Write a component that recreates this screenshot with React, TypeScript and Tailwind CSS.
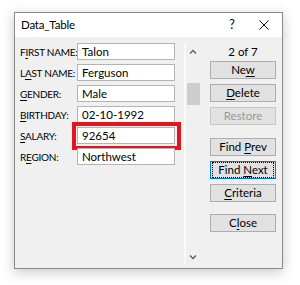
const font = { fontFamily: 'Lato, "Noto Sans", "Liberation Sans", sans-serif' };

type Field = { pre: string; key: string; post: string; value: string; mark?: boolean };

const fields: Field[] = [
  { pre: "F", key: "I", post: "RST NAME:", value: "Talon" },
  { pre: "L", key: "A", post: "ST NAME:", value: "Ferguson" },
  { pre: "", key: "G", post: "ENDER:", value: "Male" },
  { pre: "", key: "B", post: "IRTHDAY:", value: "02-10-1992" },
  { pre: "", key: "S", post: "ALARY:", value: "92654", mark: true },
  { pre: "R", key: "E", post: "GION:", value: "Northwest" },
];

function Btn({ pre, k, post, disabled, focus, className = "" }: { pre: string; k?: string; post?: string; disabled?: boolean; focus?: boolean; className?: string }) {
  const label = (
    <span className="whitespace-pre">
      {pre}
      {k && <span className="underline underline-offset-2">{k}</span>}
      {post}
    </span>
  );
  return (
    <div
      className={`h-[18px] flex items-center justify-center text-[11.5px] leading-none border ${
        focus ? "border-[#0078d7]" : disabled ? "border-[#c6c6c6]" : "border-[#adadad]"
      } bg-[#e1e1e1] ${disabled ? "text-[#9a9a9a]" : "text-black"} ${className}`}
    >
      {focus ? (
        <div className="flex items-center justify-center w-full h-full border border-dotted border-black m-[1px]">{label}</div>
      ) : (
        label
      )}
    </div>
  );
}

function Chevron({ up }: { up?: boolean }) {
  return (
    <svg width="8" height="5" viewBox="0 0 8 5">
      <path d={up ? "M1 4.5 L4 1.5 L7 4.5" : "M1 0.5 L4 3.5 L7 0.5"} fill="none" stroke="#606060" strokeWidth="1.4" />
    </svg>
  );
}

export default function App() {
  return (
    <div className="w-[300px] h-[285px] bg-white pl-[14px] pt-[12px]" style={font}>
      <div className="w-[269px] h-[257px] border border-[#8a8a8a] bg-[#f0f0f0] flex flex-col shadow-[0_3px_12px_rgba(0,0,0,0.22)]">
        {/* title bar */}
        <div className="h-[24px] bg-white flex items-center text-[11.5px] tracking-[-0.2px] text-black">
          <span className="pl-[6px] flex-1">Data_Table</span>
          <span className="w-[20px] text-center mr-[17px] text-[12.5px]">?</span>
          <svg width="10" height="10" viewBox="0 0 10 10" className="mr-[13px]">
            <path d="M0.5 0.5 L9.5 9.5 M9.5 0.5 L0.5 9.5" stroke="#111" strokeWidth="1" />
          </svg>
        </div>

        <div className="flex flex-1 pt-[6px] pb-[4px]">
          {/* fields */}
          <div className="flex flex-col gap-[4px] pl-[5px] w-[169px]">
            {fields.map((f) => (
              <div key={f.value} className="flex items-center h-[17px]">
                <span className="w-[57px] shrink-0 text-[10px] tracking-[-0.25px] leading-none text-black whitespace-nowrap">
                  {f.pre}
                  <span className="underline underline-offset-2">{f.key}</span>
                  {f.post}
                </span>
                <div className="relative w-[98px] h-[17px] shrink-0">
                  <div className="w-full h-full bg-white border border-[#b4b4b4] flex items-center pl-[4px] text-[11.5px] leading-none text-black">
                    {f.value}
                  </div>
                  {f.mark && <div className="absolute -left-[5px] -right-[6px] -top-[5px] -bottom-[6px] border-4 border-[#e5151f]" />}
                </div>
              </div>
            ))}
          </div>

          {/* scrollbar */}
          <div className="w-[16px] border-l-2 border-[#f9f9f9] flex flex-col items-center">
            <div className="h-[17px] flex items-center">
              <Chevron up />
            </div>
            <div className="mt-[23px] w-[13px] h-[22px] bg-[#cdcdcd]" />
            <div className="flex-1" />
            <div className="h-[14px] flex items-center">
              <Chevron />
            </div>
          </div>

          {/* buttons */}
          <div className="flex flex-col w-[66px] ml-[10px]">
            <div className="h-[17px] flex items-center justify-center text-[11.5px] leading-none text-black">2 of 7</div>
            <div className="mt-[1px] flex flex-col gap-[5px]">
              <Btn pre="Ne" k="w" />
              <Btn pre="" k="D" post="elete" />
              <Btn pre="Restore" disabled />
            </div>
            <div className="mt-[13px] flex flex-col gap-[5px]">
              <Btn pre="Find " k="P" post="rev" />
              <Btn pre="Find " k="N" post="ext" focus />
              <Btn pre="" k="C" post="riteria" />
            </div>
            <Btn pre="C" k="l" post="ose" className="mt-[12px]" />
          </div>
        </div>
      </div>
    </div>
  );
}
